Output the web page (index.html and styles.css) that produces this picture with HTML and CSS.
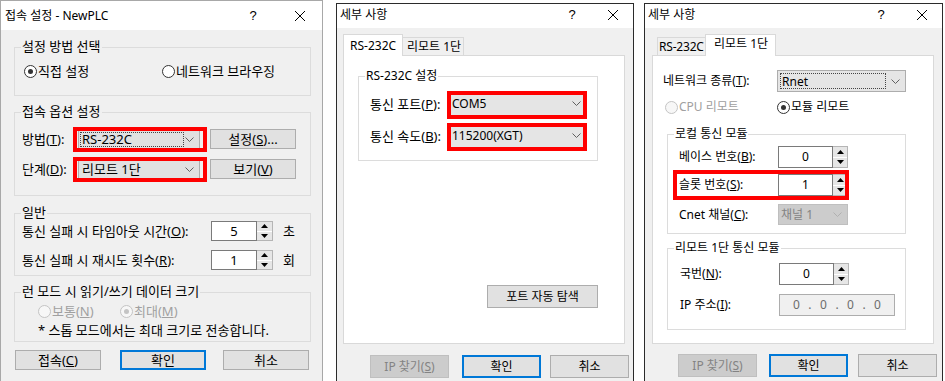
FILE: index.html
```html
<!DOCTYPE html>
<html lang="ko">
<head>
<meta charset="utf-8">
<title>접속 설정</title>
<link rel="stylesheet" href="styles.css">
</head>
<body>
<div class="desk">

  <!-- Window 1 -->
  <div class="win w1">
    <div class="titlebar">
      <span class="ttl">접속 설정 - NewPLC</span>
      <span class="help">?</span>
      <span class="close"><svg width="10" height="10" viewBox="0 0 10 10"><path d="M0 0L10 10M10 0L0 10" stroke="#000" stroke-width="1"/></svg></span>
    </div>
    <div class="body1">
      <div class="grp g1">
        <span class="cap">설정 방법 선택</span>
        <div class="rrow">
          <span class="radio on r1a"><i></i>직접 설정</span>
          <span class="radio"><i></i>네트워크 브라우징</span>
        </div>
      </div>

      <div class="grp g2">
        <span class="cap">접속 옵션 설정</span>
        <div class="frow">
          <span class="lbl l1">방법(<u>T</u>):</span>
          <span class="combo c1 hl hl1"><span class="focus">RS-232C</span><span class="chev"><svg width="9" height="5" viewBox="0 0 9 5"><path d="M.5 .5L4.5 4.5L8.5 .5" fill="none" stroke="#606060"/></svg></span></span>
          <span class="btn b1">설정(<u>S</u>)...</span>
        </div>
        <div class="frow r2">
          <span class="lbl l1">단계(<u>D</u>):</span>
          <span class="combo c1 hl hl1"><span class="ctext">리모트 1단</span><span class="chev"><svg width="9" height="5" viewBox="0 0 9 5"><path d="M.5 .5L4.5 4.5L8.5 .5" fill="none" stroke="#606060"/></svg></span></span>
          <span class="btn b1">보기(<u>V</u>)</span>
        </div>
      </div>

      <div class="grp g3">
        <span class="cap">일반</span>
        <div class="frow">
          <span class="lbl l3">통신 실패 시 타임아웃 시간(<u>O</u>):</span>
          <span class="spin s1"><span class="sv">5</span><span class="sa"><span class="ar"><svg width="7" height="4" viewBox="0 0 7 4"><path d="M0 4L3.5 0L7 4Z" fill="#000"/></svg></span><span class="ar"><svg width="7" height="4" viewBox="0 0 7 4"><path d="M0 0L3.5 4L7 0Z" fill="#000"/></svg></span></span></span>
          <span class="unit">초</span>
        </div>
        <div class="frow r2b">
          <span class="lbl l3">통신 실패 시 재시도 횟수(<u>R</u>):</span>
          <span class="spin s1"><span class="sv">1</span><span class="sa"><span class="ar"><svg width="7" height="4" viewBox="0 0 7 4"><path d="M0 4L3.5 0L7 4Z" fill="#000"/></svg></span><span class="ar"><svg width="7" height="4" viewBox="0 0 7 4"><path d="M0 0L3.5 4L7 0Z" fill="#000"/></svg></span></span></span>
          <span class="unit">회</span>
        </div>
      </div>

      <div class="grp g4">
        <span class="cap">런 모드 시 읽기/쓰기 데이터 크기</span>
        <div class="rrow dis">
          <span class="radio dis r4a"><i></i>보통(<u>N</u>)</span>
          <span class="radio dis on"><i></i>최대(<u>M</u>)</span>
        </div>
        <div class="note">* 스톱 모드에서는 최대 크기로 전송합니다.</div>
      </div>

      <div class="btnrow1">
        <span class="btn bb1">접속(<u>C</u>)</span>
        <span class="btn bb1 def m19">확인</span>
        <span class="btn bb1 m17">취소</span>
      </div>
    </div>
  </div>

  <!-- Window 2 -->
  <div class="win w2">
    <div class="titlebar">
      <span class="ttl">세부 사항</span>
      <span class="help">?</span>
      <span class="close"><svg width="10" height="10" viewBox="0 0 10 10"><path d="M0 0L10 10M10 0L0 10" stroke="#000" stroke-width="1"/></svg></span>
    </div>
    <div class="tabs t2">
      <span class="tab act ta2">RS-232C</span>
      <span class="tab ti2">리모트 1단</span>
    </div>
    <div class="panel p2">
      <div class="grp g21">
        <span class="cap">RS-232C 설정</span>
        <div class="frow fr21">
          <span class="lbl l21">통신 포트(<u>P</u>):</span>
          <span class="combo c2 hl hl2"><span class="ctext">COM5</span><span class="chev"><svg width="9" height="5" viewBox="0 0 9 5"><path d="M.5 .5L4.5 4.5L8.5 .5" fill="none" stroke="#606060"/></svg></span></span>
        </div>
        <div class="frow fr22">
          <span class="lbl l21">통신 속도(<u>B</u>):</span>
          <span class="combo c2 hl hl2"><span class="ctext">115200(XGT)</span><span class="chev"><svg width="9" height="5" viewBox="0 0 9 5"><path d="M.5 .5L4.5 4.5L8.5 .5" fill="none" stroke="#606060"/></svg></span></span>
        </div>
      </div>
      <span class="btn bauto">포트 자동 탐색</span>
    </div>
    <div class="btnrow2">
      <span class="btn bb2 dis">IP 찾기(<u>S</u>)</span>
      <span class="btn bb2 def m13">확인</span>
      <span class="btn bb2 m9">취소</span>
    </div>
  </div>

  <!-- Window 3 -->
  <div class="win w3">
    <div class="titlebar">
      <span class="ttl">세부 사항</span>
      <span class="help">?</span>
      <span class="close"><svg width="10" height="10" viewBox="0 0 10 10"><path d="M0 0L10 10M10 0L0 10" stroke="#000" stroke-width="1"/></svg></span>
    </div>
    <div class="tabs t3">
      <span class="tab ti3">RS-232C</span>
      <span class="tab act ta3">리모트 1단</span>
    </div>
    <div class="panel p3">
      <div class="frow fr31">
        <span class="lbl l31">네트워크 종류(<u>T</u>):</span>
        <span class="combo c3"><span class="focus f3">Rnet</span><span class="chev"><svg width="9" height="5" viewBox="0 0 9 5"><path d="M.5 .5L4.5 4.5L8.5 .5" fill="none" stroke="#606060"/></svg></span></span>
      </div>
      <div class="rrow rr3">
        <span class="radio dis r3a"><i></i>CPU 리모트</span>
        <span class="radio on"><i></i>모듈 리모트</span>
      </div>

      <div class="grp g31">
        <span class="cap">로컬 통신 모듈</span>
        <div class="frow fr3">
          <span class="lbl l32">베이스 번호(<u>B</u>):</span>
          <span class="spin s3"><span class="sv">0</span><span class="sa"><span class="ar"><svg width="7" height="4" viewBox="0 0 7 4"><path d="M0 4L3.5 0L7 4Z" fill="#000"/></svg></span><span class="ar"><svg width="7" height="4" viewBox="0 0 7 4"><path d="M0 0L3.5 4L7 0Z" fill="#000"/></svg></span></span></span>
        </div>
        <div class="frow fr3 fr3b">
          <span class="hlrow hl">
            <span class="lbl l32">슬롯 번호(<u>S</u>):</span>
            <span class="spin s3"><span class="sv">1</span><span class="sa"><span class="ar"><svg width="7" height="4" viewBox="0 0 7 4"><path d="M0 4L3.5 0L7 4Z" fill="#000"/></svg></span><span class="ar"><svg width="7" height="4" viewBox="0 0 7 4"><path d="M0 0L3.5 4L7 0Z" fill="#000"/></svg></span></span></span>
          </span>
        </div>
        <div class="frow fr3 fr3c">
          <span class="lbl l32">Cnet 채널(<u>C</u>):</span>
          <span class="combo cdis"><span class="ctext">채널 1</span><span class="chev"><svg width="9" height="5" viewBox="0 0 9 5"><path d="M.5 .5L4.5 4.5L8.5 .5" fill="none" stroke="#b0b0b0"/></svg></span></span>
        </div>
      </div>

      <div class="grp g32">
        <span class="cap">리모트 1단 통신 모듈</span>
        <div class="frow fr4">
          <span class="lbl l32">국번(<u>N</u>):</span>
          <span class="spin s3"><span class="sv">0</span><span class="sa"><span class="ar"><svg width="7" height="4" viewBox="0 0 7 4"><path d="M0 4L3.5 0L7 4Z" fill="#000"/></svg></span><span class="ar"><svg width="7" height="4" viewBox="0 0 7 4"><path d="M0 0L3.5 4L7 0Z" fill="#000"/></svg></span></span></span>
        </div>
        <div class="frow fr4 fr4b">
          <span class="lbl l32">IP 주소(<u>I</u>):</span>
          <span class="ipbox"><span>0</span><span>.</span><span>0</span><span>.</span><span>0</span><span>.</span><span>0</span></span>
        </div>
      </div>
    </div>
    <div class="btnrow3">
      <span class="btn bb3 dis">IP 찾기(<u>S</u>)</span>
      <span class="btn bb3 def m12">확인</span>
      <span class="btn bb3 m10">취소</span>
    </div>
  </div>

</div>
</body>
</html>
```

FILE: styles.css
```css
* { box-sizing: border-box; }
html, body { margin: 0; padding: 0; }
body {
  width: 945px; height: 381px; overflow: hidden; background: #fff;
  font-family: "Noto Sans", "Noto Sans CJK KR", sans-serif;
  font-size: 12px; line-height: 16px; color: #000;
}
u { text-decoration: underline; text-underline-offset: 1px; }
.desk { display: flex; align-items: flex-start; }

.win { background: #f0f0f0; display: flex; flex-direction: column; flex: none; height: 400px; }
.w1 { width: 323px; border: 1px solid #a8a8a8; }
.w2 { width: 298px; border: 1px solid #2b2b2b; margin: 3px 0 0 13px; }
.w3 { width: 299px; border: 1px solid #2b2b2b; margin: 3px 0 0 10px; }

.titlebar { background: #fff; display: flex; align-items: center; flex: none; }
.w1 .titlebar { height: 29px; }
.w2 .titlebar, .w3 .titlebar { height: 24px; padding-bottom: 2px; }
.ttl { flex: 1; padding-left: 4px; }
.w2 .ttl, .w3 .ttl { padding-left: 3px; }
.help { text-align: center; font-size: 13px; font-family: "Liberation Sans", sans-serif; }
.close { display: flex; justify-content: center; align-items: center; }
.w1 .help { width: 50px; }
.w1 .close { width: 44px; }
.w2 .help, .w3 .help { width: 42px; }
.w2 .close, .w3 .close { width: 40px; }

/* group boxes */
.grp { position: relative; border: 1px solid #dcdcdc; flex: none; }
.cap { position: absolute; top: -9px; left: 6px; padding: 0 1px; line-height: 16px; white-space: nowrap; }
.w1 .cap { background: #f0f0f0; top: -10px; }
.panel .cap { background: #fff; }

/* window 1 */
.body1 { display: flex; flex-direction: column; padding: 0 11px 0 13px; font-size: 13px; }
.g1 { margin-top: 17px; height: 49px; padding: 15px 0 0 9px; }
.g2 { margin-top: 16px; height: 84px; padding: 16px 0 0 7px; }
.g3 { margin-top: 17px; height: 63px; padding: 7px 0 0 7px; }
.g4 { margin-top: 16px; height: 50px; padding: 10px 0 0 23px; }

.rrow { display: flex; align-items: center; height: 16px; }
.r1a { width: 138px; }
.r4a { width: 82px; }
.radio { display: inline-flex; align-items: center; white-space: nowrap; }
.radio i { width: 13px; height: 13px; border: 1px solid #333; border-radius: 50%; background: #fff; margin-right: 1px; position: relative; flex: none; }
.radio.on i::after { content: ""; position: absolute; left: 3px; top: 3px; width: 5px; height: 5px; border-radius: 50%; background: #333; }
.radio.dis { color: #a0a0a0; }
.radio.dis i { border-color: #c4c4c4; background: #f7f7f7; }
.radio.dis.on i::after { background: #c4c4c4; }
.note { margin-top: 3px; height: 16px; white-space: nowrap; }

.frow { display: flex; align-items: center; }
.g2 .frow { height: 20px; }
.g2 .r2 { margin-top: 10px; }
.lbl { white-space: nowrap; flex: none; }
.l1 { width: 56px; }
.l3 { width: 189px; }

.combo { display: flex; align-items: center; background: #e1e1e1; border: 1px solid #adadad; flex: none; position: relative; }
.c1 { width: 122px; height: 20px; padding-left: 1px; }
.focus { outline: 1px dotted #444; outline-offset: -1px; padding: 0 2px; height: 15px; line-height: 15px; display: flex; align-items: center; }
.c1 .focus { width: 104px; }
.ctext { padding-left: 2px; white-space: nowrap; }
.chev { margin-left: auto; display: flex; padding-right: 5px; }

.hl::after { content: ""; position: absolute; border: 4px solid #ff0000; pointer-events: none; }
.hl1::after { left: -6px; right: -8px; top: -3px; bottom: -4px; }

.btn { display: flex; align-items: center; justify-content: center; background: #e1e1e1; border: 1px solid #adadad; flex: none; white-space: nowrap; }
.btn.def { border: 1px solid #0078d7; box-shadow: inset 0 0 0 1px #0078d7; }
.btn.dis { background: #cccccc; border-color: #bfbfbf; color: #838383; }
.b1 { width: 86px; height: 20px; margin-left: 10px; }

.spin { display: flex; flex: none; }
.sv { background: #fff; border: 1px solid #7a7a7a; display: flex; align-items: center; justify-content: center; }
.sa { display: flex; flex-direction: column; border: 1px solid #b5b5b5; border-left: none; background: #fff; }
.ar { flex: 1; display: flex; align-items: center; justify-content: center; background: #e6e6e6; }
.ar + .ar { border-top: 1px solid #fff; }
.s1 { height: 20px; }
.s1 .sv { width: 46px; }
.s1 .sa { width: 16px; }
.g3 .frow { height: 20px; }
.g3 .r2b { margin-top: 9px; }
.unit { margin-left: 10px; }

.btnrow1 { display: flex; margin-top: 8px; padding-left: 1px; }
.bb1 { width: 86px; height: 20px; }
.m19 { margin-left: 19px; }
.m17 { margin-left: 17px; }

/* tabs */
.tabs { display: flex; align-items: flex-end; height: 21px; flex: none; margin-top: 6px; }
.tab { border: 1px solid #d9d9d9; border-bottom: none; display: flex; align-items: center; white-space: nowrap; background: #f0f0f0; overflow: hidden; }
.tab.act { background: #fff; height: 22px; margin-bottom: -1px; position: relative; z-index: 1; }
.t2 { padding-left: 6px; }
.ta2 { width: 60px; padding-left: 6px; }
.ti2 { width: 62px; height: 18px; padding-left: 4px; margin-left: -1px; }
.t3 { padding-left: 12px; }
.ti3 { width: 49px; height: 18px; padding-left: 1px; letter-spacing: -0.2px; }
.ta3 { width: 71px; padding-left: 8px; margin-left: -1px; padding-bottom: 3px; }

.panel { background: #fff; border: 1px solid #d9d9d9; display: flex; flex-direction: column; flex: none; width: 282px; height: 289px; }
.p2 { margin-left: 6px; }
.p3 { margin-left: 7px; }

/* window 2 panel */
.g21 { margin: 20px 0 0 14px; width: 240px; height: 85px; padding: 14px 0 0 11px; }
.fr21, .fr22 { height: 28px; }
.fr22 { margin-top: 4px; }
.l21 { width: 77px; padding-bottom: 3px; font-size: 13px; }
.c2 { width: 140px; height: 28px; border: none; background: #e5e5e5; padding: 0 0 0 5px; }
.c2 .chev { padding-right: 6px; }
.hl2::after { left: 0; right: 0; top: 0; bottom: 0; }
.c2 .ctext { padding-left: 0; padding-bottom: 3px; }
.c2 .chev { padding-bottom: 3px; }
.bauto { width: 111px; height: 23px; margin: 124px 26px 0 auto; }

.btnrow2 { display: flex; margin-top: 11px; padding-left: 33px; }
.bb2 { width: 79px; height: 23px; }
.m13 { margin-left: 13px; }
.m9 { margin-left: 9px; }

/* window 3 panel */
.fr31 { margin-top: 14px; height: 22px; padding-left: 10px; }
.l31 { width: 114px; }
.c3 { width: 129px; height: 22px; background: #e5e5e5; padding-left: 2px; }
.f3 { width: 106px; height: 16px; padding-left: 2px; }
.rr3 { margin-top: 7px; padding-left: 12px; }
.r3a { width: 112px; }

.g31 { margin: 19px 0 0 14px; width: 239px; height: 100px; padding: 11px 0 0 11px; }
.fr3 { height: 22px; }
.fr3b { margin-top: 6px; }
.fr3c { margin-top: 8px; height: 21px; }
.l32 { width: 99px; }
.s3 { height: 22px; }
.s3 .sv { width: 55px; }
.s3 .sa { width: 15px; }
.hlrow { display: flex; align-items: center; position: relative; height: 22px; }
.hlrow::after { left: -6px; right: -1px; top: -4px; bottom: -4px; }
.cdis { width: 70px; height: 21px; background: #cccccc; border-color: #bfbfbf; color: #838383; }

.g32 { margin: 14px 0 0 14px; width: 239px; height: 82px; padding: 14px 0 0 12px; }
.fr4 { height: 22px; }
.fr4b { margin-top: 9px; }
.ipbox { width: 116px; height: 22px; background: #f0f0f0; border: 1px solid #adadad; display: flex; align-items: center; justify-content: space-between; color: #6d6d6d; padding: 0 13px 0 13px; }

.btnrow3 { display: flex; margin-top: 10px; padding-left: 33px; }
.bb3 { width: 79px; height: 23px; }
.m12 { margin-left: 12px; }
.m10 { margin-left: 10px; }
```
